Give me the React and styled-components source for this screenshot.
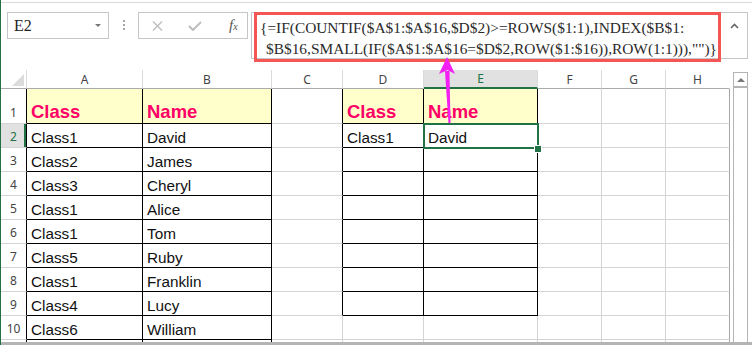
import React from 'react';
import styled, { createGlobalStyle, css } from 'styled-components';

const Global = createGlobalStyle`
  html, body { margin: 0; padding: 0; background: #fff; }
  #root { width: 752px; height: 345px; }
  * { box-sizing: border-box; }
`;

const GREEN = '#217346';
const GRID = '#d4d4d4';

const Window = styled.div`
  position: relative;
  width: 752px;
  height: 345px;
  overflow: hidden;
  background: #fff;
  border-left: 1px solid ${GREEN};
  display: flex;
  flex-direction: column;
  font-family: "Liberation Sans", Arial, sans-serif;
`;

const FormulaBar = styled.div`
  margin-top: 2px;
  height: 68px;
  border-top: 1px solid #dadada;
  display: flex;
  align-items: flex-start;
  padding: 9px 0 0 6px;
`;

const NameBox = styled.div`
  width: 102px;
  height: 27px;
  border: 1px solid #c6c6c6;
  display: flex;
  align-items: center;
  justify-content: space-between;
  padding: 0 7px 0 6px;
  font-family: "Liberation Serif", "Times New Roman", serif;
  font-size: 16px;
  color: #222;
`;

const Caret = styled.span`
  width: 0;
  height: 0;
  border-left: 3px solid transparent;
  border-right: 3px solid transparent;
  border-top: 3px solid #777;
`;

const Dots = styled.div`
  margin: 8px 0 0 14px;
  width: 2px;
  display: flex;
  flex-direction: column;
  gap: 2px;
  span { width: 2px; height: 2px; background: #a6a6a6; }
`;

const FxButtons = styled.div`
  margin-left: 13px;
  width: 110px;
  height: 27px;
  border: 1px solid #c6c6c6;
  display: flex;
  align-items: center;
  padding-left: 13px;
  gap: 25px;
`;

const Fx = styled.span`
  font-family: "Liberation Serif", "Times New Roman", serif;
  font-style: italic;
  font-size: 15px;
  color: #555;
  margin-left: 2px;
  sub { font-size: 10px; vertical-align: 0; }
`;

const FormulaBox = styled.div`
  margin-left: 3px;
  width: 497px;
  height: 47px;
  border: 1px solid #c6c6c6;
  display: flex;
  align-items: flex-start;
`;

const Highlight = styled.div`
  margin: -1px 0 0 2px;
  width: 467px;
  height: 50px;
  border: 3px solid #f45656;
  padding: 2px 0 0 3px;
  font-family: "Liberation Serif", "Times New Roman", serif;
  font-size: 15.4px;
  line-height: 21px;
  color: #2a2a2a;
  white-space: nowrap;
`;

const FormulaLine = styled.div`
  padding-left: ${p => p.$indent || 0}px;
`;

const Expand = styled.div`
  flex: 1;
  display: flex;
  justify-content: center;
  padding-top: 10px;
`;

const Sheet = styled.div`
  height: 275px;
  display: flex;
  border-bottom: 3px solid #b4b4b4;
  overflow: hidden;
`;

const Grid = styled.div`
  display: grid;
  grid-template-columns: 26px 116px 129px 71px 81px 114px 64px 64px 64px;
  grid-template-rows: 19px 35px repeat(10, 24px);
  align-content: start;
`;

const Corner = styled.div`
  position: relative;
  border-right: 1px solid #dadada;
  border-bottom: 1px solid #ababab;
  &::after {
    content: '';
    position: absolute;
    right: 2px;
    bottom: 2px;
    width: 0;
    height: 0;
    border-left: 12px solid transparent;
    border-bottom: 12px solid #dcdcdc;
  }
`;

const ColHead = styled.div`
  display: flex;
  align-items: center;
  justify-content: center;
  font-family: "Noto Sans", "Open Sans", sans-serif;
  font-size: 12px;
  color: #444;
  border-right: 1px solid ${p => (p.$last ? 'transparent' : '#dadada')};
  border-bottom: 1px solid #ababab;
  ${p => p.$active && css`
    background: #e1e1e1;
    color: ${GREEN};
    border-bottom: 2px solid ${GREEN};
  `}
`;

const RowHead = styled.div`
  display: flex;
  align-items: flex-end;
  justify-content: center;
  padding-bottom: 2px;
  font-family: "Noto Sans", "Open Sans", sans-serif;
  font-size: 12px;
  color: #444;
  border-right: 1px solid #000;
  border-bottom: 1px solid ${GRID};
  ${p => p.$active && css`
    background: #e1e1e1;
    color: ${GREEN};
    box-shadow: inset -2px 0 0 ${GREEN};
  `}
`;

const Cell = styled.div`
  position: relative;
  display: flex;
  align-items: flex-end;
  padding: 0 0 0 4px;
  font-size: 15.3px;
  color: #111;
  white-space: nowrap;
  background: ${p => (p.$fill ? '#ffffcc' : '#fff')};
  border-right: 1px solid ${p => p.$right};
  border-bottom: 1px solid ${p => p.$bottom};
  ${p => p.$head && css`
    font-size: 18.5px;
    font-weight: bold;
    color: #ff0066;
  `}
  ${p => p.$last && css`border-right-color: #a6a6a6;`}
  ${p => p.$selected && css`
    &::after {
      content: '';
      position: absolute;
      left: -1px;
      top: -1px;
      right: -2px;
      bottom: -2px;
      border: 2px solid ${GREEN};
      z-index: 2;
    }
    &::before {
      content: '';
      position: absolute;
      right: -4px;
      bottom: -5px;
      width: 6px;
      height: 6px;
      background: ${GREEN};
      box-shadow: 0 0 0 1px #fff;
      z-index: 3;
    }
  `}
`;

const ScrollArea = styled.div`
  flex: 1;
  padding: 2px 5px 0 3px;
  display: flex;
`;

const ScrollTrack = styled.div`
  width: 15px;
  border-left: 1px solid #b4b4b4;
  border-right: 1px solid #b4b4b4;
  border-top: 1px solid #b4b4b4;
`;

const ScrollBtn = styled.div`
  height: 15px;
  border-bottom: 2px solid #b4b4b4;
  display: flex;
  align-items: center;
  justify-content: center;
  &::after {
    content: '';
    border-left: 4px solid transparent;
    border-right: 4px solid transparent;
    border-bottom: 4px solid #777;
  }
`;

const Overlay = styled.svg`
  position: absolute;
  left: 0;
  top: 0;
  pointer-events: none;
`;

const COLS = ['A', 'B', 'C', 'D', 'E', 'F', 'G', 'H'];

const DATA = {
  A: ['Class', 'Class1', 'Class2', 'Class3', 'Class1', 'Class1', 'Class5', 'Class1', 'Class4', 'Class6', ''],
  B: ['Name', 'David', 'James', 'Cheryl', 'Alice', 'Tom', 'Ruby', 'Franklin', 'Lucy', 'William', ''],
  D: ['Class', 'Class1'],
  E: ['Name', 'David'],
};

const inAB = (c, r) => (c === 0 || c === 1) && r <= 10;
const inDE = (c, r) => (c === 3 || c === 4) && r <= 8;
const inTable = (c, r) => inAB(c, r) || inDE(c, r);

function cellBorders(c, r) {
  const me = inTable(c, r);
  const rightNeighbor = inTable(c + 1, r);
  const belowNeighbor = inTable(c, r + 1);
  return {
    right: me || rightNeighbor ? '#000' : GRID,
    bottom: me || belowNeighbor ? '#000' : GRID,
  };
}

export default function App() {
  const rows = Array.from({ length: 11 }, (_, i) => i);
  return (
    <Window>
      <Global />
      <FormulaBar>
        <NameBox>
          <span>E2</span>
          <Caret />
        </NameBox>
        <Dots><span /><span /><span /></Dots>
        <FxButtons>
          <svg width="11" height="10" viewBox="0 0 11 10">
            <path d="M1 0.5 L10 9.5 M10 0.5 L1 9.5" stroke="#bdbdbd" strokeWidth="1.4" fill="none" />
          </svg>
          <svg width="14" height="10" viewBox="0 0 14 10">
            <path d="M1 5 L5 9 L13 1" stroke="#bdbdbd" strokeWidth="2" fill="none" />
          </svg>
          <Fx>f<sub>x</sub></Fx>
        </FxButtons>
        <FormulaBox>
          <Highlight>
            <FormulaLine>{'{=IF(COUNTIF($A$1:$A$16,$D$2)>=ROWS($1:1),INDEX($B$1:'}</FormulaLine>
            <FormulaLine $indent={6}>{'$B$16,SMALL(IF($A$1:$A$16=$D$2,ROW($1:$16)),ROW(1:1))),"")}'}</FormulaLine>
          </Highlight>
          <Expand>
            <svg width="9" height="6" viewBox="0 0 9 6">
              <path d="M1 5 L4.5 1.5 L8 5" stroke="#666" strokeWidth="1.6" fill="none" />
            </svg>
          </Expand>
        </FormulaBox>
      </FormulaBar>
      <Sheet>
        <Grid>
          <Corner />
          {COLS.map((c, i) => (
            <ColHead key={c} $active={c === 'E'} $last={i === COLS.length - 1}>{c}</ColHead>
          ))}
          {rows.map(r => (
            <React.Fragment key={r}>
              <RowHead $active={r === 1}>{r < 10 ? r + 1 : ''}</RowHead>
              {COLS.map((c, ci) => {
                const b = cellBorders(ci, r);
                const val = (DATA[c] && DATA[c][r]) || '';
                return (
                  <Cell
                    key={c}
                    $right={b.right}
                    $bottom={b.bottom}
                    $fill={r === 0 && inTable(ci, r)}
                    $head={r === 0}
                    $last={ci === COLS.length - 1}
                    $selected={c === 'E' && r === 1}
                  >
                    {val}
                  </Cell>
                );
              })}
            </React.Fragment>
          ))}
        </Grid>
        <ScrollArea>
          <ScrollTrack>
            <ScrollBtn />
          </ScrollTrack>
        </ScrollArea>
      </Sheet>
      <Overlay width="752" height="345" viewBox="0 0 752 345">
        <polygon points="444,71 448.5,71 449.5,124 447.5,124" fill="#f31ff3" />
        <polygon points="446,57 454,74 446.5,70 438,74" fill="#f31ff3" />
      </Overlay>
    </Window>
  );
}
